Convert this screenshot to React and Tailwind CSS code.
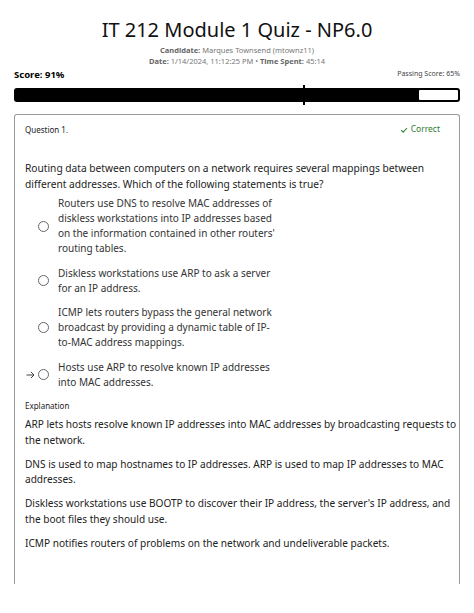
import React from 'react';

const options = [
  'Routers use DNS to resolve MAC addresses of diskless workstations into IP addresses based on the information contained in other routers\' routing tables.',
  'Diskless workstations use ARP to ask a server for an IP address.',
  'ICMP lets routers bypass the general network broadcast by providing a dynamic table of IP-to-MAC address mappings.',
  'Hosts use ARP to resolve known IP addresses into MAC addresses.',
];

const explanation = [
  'ARP lets hosts resolve known IP addresses into MAC addresses by broadcasting requests to the network.',
  'DNS is used to map hostnames to IP addresses. ARP is used to map IP addresses to MAC addresses.',
  'Diskless workstations use BOOTP to discover their IP address, the server\'s IP address, and the boot files they should use.',
  'ICMP notifies routers of problems on the network and undeliverable packets.',
];

function Radio() {
  return <span className="block w-[11px] h-[11px] rounded-full border border-[#666] bg-white" />;
}

function Arrow() {
  return (
    <svg width="9" height="8" viewBox="0 0 9 8" fill="none" stroke="#444" strokeWidth="1">
      <path d="M0.5 4 H8 M5 1 L8 4 L5 7" />
    </svg>
  );
}

export default function App() {
  return (
    <div className="w-[474px] h-[613px] bg-white text-[#222] overflow-hidden" style={{ fontFamily: '"Noto Sans", "Open Sans", sans-serif' }}>
      <div className="px-[14px]">
        <h1 className="pt-[15px] text-center text-[20px] leading-[30px] text-[#111]">IT 212 Module 1 Quiz - NP6.0</h1>
        <div className="text-center text-[7.5px] leading-[11px] text-[#777]">
          <div><span className="font-bold text-[#666]">Candidate:</span> Marques Townsend (mtownz11)</div>
          <div><span className="font-bold text-[#666]">Date:</span> 1/14/2024, 11:12:25 PM • <span className="font-bold text-[#666]">Time Spent:</span> 45:14</div>
        </div>
        <div className="flex justify-between items-start mt-[1px]">
          <span className="text-[9.5px] font-bold text-black">Score: 91%</span>
          <span className="text-[7px] text-[#444] mt-[1px]">Passing Score: 65%</span>
        </div>
        <div className="relative mt-[6px] h-[14px] rounded-[3px] bg-black p-[2px] flex justify-end">
          <div className="w-[39px] h-full bg-white rounded-[1px]" />
          <div className="absolute left-[289px] top-[-3px] w-[2px] h-[20px] bg-black" />
        </div>
        <div className="mt-[12px] h-[470px] border border-b-0 border-[#9a9a9a] rounded-t-[3px] pl-[10px] pr-[1px]">
          <div className="flex justify-between items-center pt-[8px]">
            <span className="text-[8px] text-[#222]">Question 1.</span>
            <span className="text-[8.5px] text-[#2e7d32] flex items-center gap-[3px] mr-[18px]">
              <svg width="8" height="8" viewBox="0 0 10 10" fill="none" stroke="#2e7d32" strokeWidth="1.3"><path d="M1.5 5.2 L4 7.7 L8.8 2.5" /></svg>
              Correct
            </span>
          </div>
          <p className="mt-[24px] w-[420px] text-[10.2px] leading-[16px] text-[#222]">
            Routing data between computers on a network requires several mappings between different addresses. Which of the following statements is true?
          </p>
          <div className="mt-[4px] flex flex-col gap-[9.5px]">
            {options.map((o, i) => (
              <div key={i} className="flex items-center">
                <div className="w-[24px] flex items-center justify-end gap-[3px]">
                  {i === 3 && <Arrow />}
                  <Radio />
                </div>
                <span className="ml-[9px] w-[218px] text-[10px] leading-[15px] text-[#333]">{o}</span>
              </div>
            ))}
          </div>
          <div className="mt-[10.5px] text-[8px] text-[#222]">Explanation</div>
          <div className="mt-[5px] flex flex-col gap-[8.5px]">
            {explanation.map((e, i) => (
              <p key={i} className="text-[10.1px] leading-[15.5px] text-[#222]">{e}</p>
            ))}
          </div>
        </div>
      </div>
    </div>
  );
}
